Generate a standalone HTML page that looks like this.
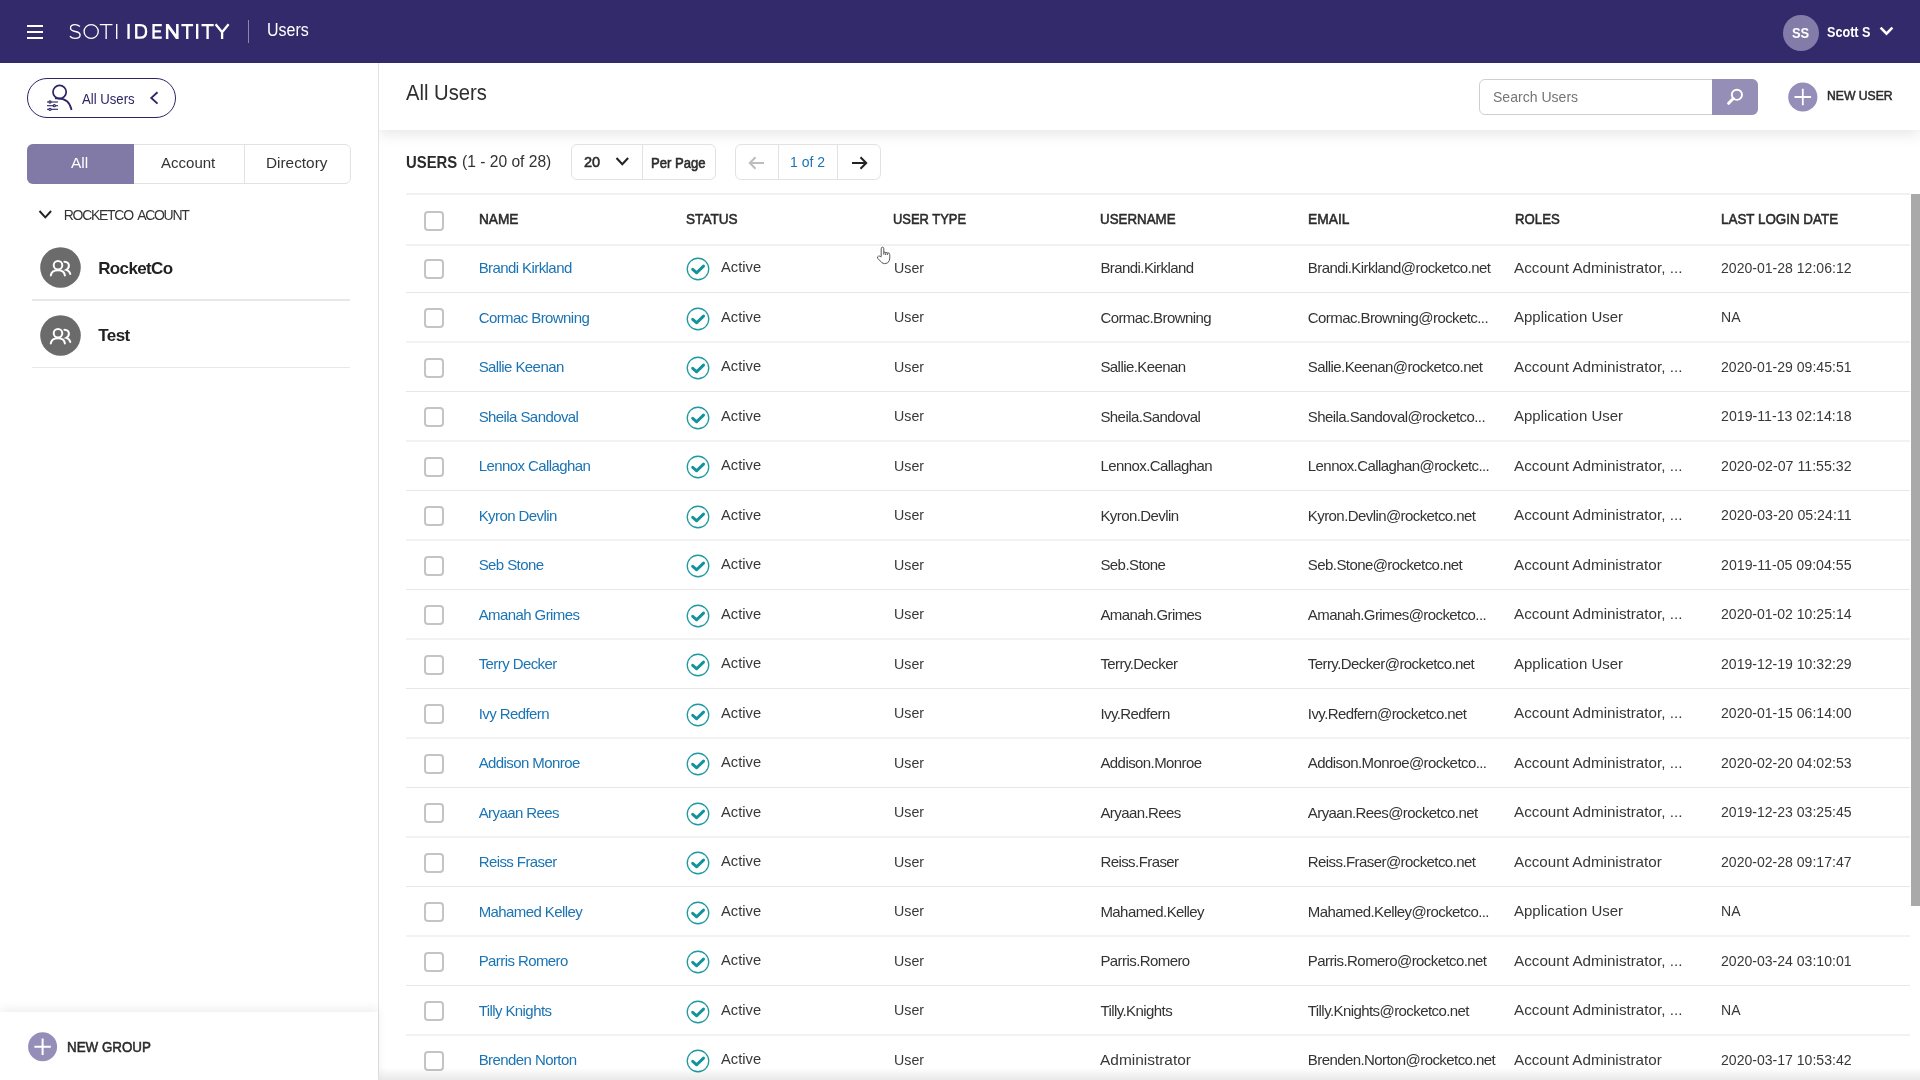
<!DOCTYPE html>
<html><head><meta charset="utf-8"><style>
*{box-sizing:border-box}
html,body{margin:0;padding:0;width:1920px;height:1080px;overflow:hidden;background:#fff;font-family:"Liberation Sans", sans-serif}
.t{position:absolute;line-height:0;white-space:nowrap;transform-origin:0 0}
.ic{position:absolute}
.hl{position:absolute;left:406px;width:1504px}
.cb{position:absolute;left:424px;width:20px;height:20px;border:2px solid #c4c4c4;border-radius:4px;background:#fff}
#hdr{position:absolute;left:0;top:0;width:1920px;height:63px;background:#322a6b}
#side{position:absolute;left:0;top:63px;width:378px;height:1017px;background:#fff}
#vdiv{position:absolute;left:378px;top:63px;width:1px;height:1017px;background:#e2e2e2}
#topbar{position:absolute;left:379px;top:63px;width:1541px;height:67px;background:#fff;box-shadow:0 4px 14px rgba(0,0,0,0.1);clip-path:inset(0 0 -30px 0)}
#foot{position:absolute;left:0;top:1012px;width:378px;height:68px;background:#fff;box-shadow:0 -3px 10px rgba(0,0,0,0.07)}
#sb{position:absolute;left:1911px;top:194px;width:9px;height:712px;background:#a9a9a9}
#botshade{position:absolute;left:379px;top:1068px;width:1541px;height:12px;background:linear-gradient(rgba(0,0,0,0),rgba(0,0,0,0.09))}
</style></head><body>
<div id="hdr">
  <svg style="position:absolute;left:27px;top:25px" width="16" height="14" viewBox="0 0 16 14"><rect x="0" y="0" width="16" height="2" fill="#fff"/><rect x="0" y="6" width="16" height="2" fill="#fff"/><rect x="0" y="12" width="16" height="2" fill="#fff"/></svg>
  <svg style="position:absolute;left:0;top:0" width="240" height="63" viewBox="0 0 240 63">
   <g fill="none" stroke="#fff" stroke-width="1.35" stroke-linecap="butt">
    <path d="M79.9 26.6 Q77.8 24.6 75.1 24.6 Q70.5 24.6 70.5 28.1 Q70.5 30.7 75.2 31.5 Q80.1 32.3 80.1 35.1 Q80.1 38.4 75.1 38.4 Q71.9 38.4 69.9 36.2"/>
    <ellipse cx="91.15" cy="31.5" rx="7.1" ry="6.9"/>
    <path d="M99.8 24.65 H112.5 M106.15 24.65 V38.9 M116.7 24 V38.9"/>
   </g>
   <g fill="none" stroke="#fff" stroke-width="2.35" stroke-linecap="butt" stroke-linejoin="miter">
    <path d="M128.55 23.9 V38.9"/>
    <path d="M136.25 25.15 V37.65 H140.2 Q146.1 37.65 146.1 31.4 Q146.1 25.15 140.2 25.15 Z"/>
    <path d="M161.8 25.15 H153.55 V37.65 H161.8 M153.55 31.3 H160.9"/>
    
    <path d="M181.4 25.15 H193.1 M187.25 25.15 V38.9"/>
    <path d="M165.9 38.9 V23.9 H168.6 L176.1 34.2 V23.9 H178.6 V38.9 H175.9 L168.4 28.6 V38.9 Z" fill="#fff" stroke="none"/>
    <path d="M197.2 23.9 V38.9"/>
    <path d="M201.5 25.15 H213.7 M207.6 25.15 V38.9"/>
    <path d="M215.6 24.2 L222.1 32.2 L228.6 24.2 M222.1 32 V38.9"/>
   </g>
  </svg>
  <div style="position:absolute;left:247.5px;top:20px;width:1.5px;height:23px;background:#8d86b4"></div>
  <div style="position:absolute;left:1782.5px;top:15px;width:36px;height:36px;border-radius:50%;background:#847ca8"></div>
  <svg style="position:absolute;left:1879px;top:26px" width="15" height="10" viewBox="0 0 15 10"><path d="M1.6 1.6 L7.5 7.7 L13.4 1.6" fill="none" stroke="#fff" stroke-width="2.6"/></svg>
</div>
<div id="side">
</div>
<div id="vdiv"></div>
<div id="topbar"></div>
<div id="foot"></div>
<!-- pill -->
<div style="position:absolute;left:27px;top:77.5px;width:148.5px;height:40.5px;border:1.5px solid #2c2566;border-radius:21px"></div>
<svg style="position:absolute;left:45px;top:83px" width="30" height="30" viewBox="0 0 30 30">
  <circle cx="14.6" cy="9" r="6.6" fill="none" stroke="#2c2566" stroke-width="1.7"/>
  <path d="M10 15.5 Q 24 14 26.6 27" fill="none" stroke="#2c2566" stroke-width="1.7"/>
  <g stroke="#2c2566" stroke-width="1.1" fill="#fff"><line x1="2" y1="19" x2="13" y2="19"/><line x1="2" y1="22.7" x2="13" y2="22.7"/><line x1="2" y1="26.3" x2="13" y2="26.3"/><circle cx="5" cy="19" r="1.1"/><circle cx="9.3" cy="22.7" r="1.1"/><circle cx="5" cy="26.3" r="1.1"/></g>
</svg>
<svg style="position:absolute;left:149px;top:91px" width="11" height="14" viewBox="0 0 11 14"><path d="M8.5 1.2 L2.3 6.9 L8.5 12.6" fill="none" stroke="#2c2566" stroke-width="1.9"/></svg>
<!-- tabs -->
<div style="position:absolute;left:27px;top:144px;width:324px;height:40px;border:1px solid #e2e2e2;border-radius:6px"></div>
<div style="position:absolute;left:27px;top:144px;width:106.7px;height:40px;background:#8179a6;border-radius:6px 0 0 6px"></div>
<div style="position:absolute;left:243.5px;top:145px;width:1px;height:38px;background:#e2e2e2"></div>
<svg style="position:absolute;left:38px;top:209px" width="15" height="11" viewBox="0 0 15 11"><path d="M1.5 2 L7.3 8.3 L13.1 2" fill="none" stroke="#222" stroke-width="1.9"/></svg>
<!-- groups -->
<svg style="position:absolute;left:40px;top:247px" width="41" height="41" viewBox="0 0 41 41"><circle cx="20.5" cy="20.5" r="20.3" fill="#6b6b6b"/>
 <g fill="none" stroke="#fff" stroke-width="2" stroke-linecap="round"><circle cx="18" cy="18.3" r="4.3"/><path d="M10.8 28.4 C11.3 24.6 14 23.2 18 23.2 C22 23.2 24.5 24.6 24.9 28.4"/><path d="M24.4 14.7 Q28.9 15.1 28.9 18.5 Q28.9 21.4 26.2 22.9 Q29.6 24 30.3 27"/></g></svg>
<div style="position:absolute;left:32px;top:299px;width:318px;height:1.5px;background:#e8e8e8"></div>
<svg style="position:absolute;left:40px;top:315px" width="41" height="41" viewBox="0 0 41 41"><circle cx="20.5" cy="20.5" r="20.3" fill="#6b6b6b"/>
 <g fill="none" stroke="#fff" stroke-width="2" stroke-linecap="round"><circle cx="18" cy="18.3" r="4.3"/><path d="M10.8 28.4 C11.3 24.6 14 23.2 18 23.2 C22 23.2 24.5 24.6 24.9 28.4"/><path d="M24.4 14.7 Q28.9 15.1 28.9 18.5 Q28.9 21.4 26.2 22.9 Q29.6 24 30.3 27"/></g></svg>
<div style="position:absolute;left:32px;top:366.5px;width:318px;height:1.5px;background:#e8e8e8"></div>
<!-- new group -->
<svg style="position:absolute;left:28px;top:1031.5px" width="30" height="30" viewBox="0 0 30 30"><circle cx="14.6" cy="14.7" r="14.5" fill="#958eb8"/><path d="M6.4 14.7 H22.8 M14.6 6.5 V22.9" stroke="#fff" stroke-width="2"/></svg>
<!-- search -->
<div style="position:absolute;left:1478.5px;top:79px;width:279px;height:36px;border:1px solid #cfcfcf;border-radius:6px;background:#fff"></div>
<div style="position:absolute;left:1712px;top:79px;width:45.5px;height:36px;border-radius:0 6px 6px 0;background:#958fb7"></div>
<svg style="position:absolute;left:1724px;top:86px" width="22" height="22" viewBox="0 0 22 22"><circle cx="12.9" cy="8.8" r="5.1" fill="none" stroke="#fff" stroke-width="1.9"/><path d="M9.3 12.5 L4.6 17.3" stroke="#fff" stroke-width="3" stroke-linecap="round"/></svg>
<!-- new user -->
<svg style="position:absolute;left:1787.5px;top:81.5px" width="30" height="30" viewBox="0 0 30 30"><circle cx="14.8" cy="15" r="14.6" fill="#958eb8"/><path d="M6.5 15 H23.1 M14.8 6.8 V23.3" stroke="#fff" stroke-width="1.8"/></svg>
<!-- per page -->
<div style="position:absolute;left:571px;top:144px;width:145px;height:36px;border:1px solid #e2e2e2;border-radius:6px"></div>
<div style="position:absolute;left:641.5px;top:145px;width:1px;height:34px;background:#e2e2e2"></div>
<svg style="position:absolute;left:615px;top:156px" width="15" height="11" viewBox="0 0 15 11"><path d="M1.5 2 L7.3 8.3 L13.1 2" fill="none" stroke="#222" stroke-width="2"/></svg>
<div style="position:absolute;left:734.5px;top:144px;width:146.5px;height:36px;border:1px solid #e2e2e2;border-radius:6px"></div>
<div style="position:absolute;left:778px;top:145px;width:1px;height:34px;background:#e2e2e2"></div>
<div style="position:absolute;left:836.5px;top:145px;width:1px;height:34px;background:#e2e2e2"></div>
<svg style="position:absolute;left:747px;top:155px" width="20" height="16" viewBox="0 0 20 16"><path d="M17 8 H3 M8.5 2.3 L2.8 8 L8.5 13.7" fill="none" stroke="#bdbdbd" stroke-width="2"/></svg>
<svg style="position:absolute;left:849px;top:155px" width="20" height="16" viewBox="0 0 20 16"><path d="M3 8 H17 M11.5 2.3 L17.2 8 L11.5 13.7" fill="none" stroke="#222" stroke-width="2"/></svg>
<div class='hl' style='top:193px;height:2px;background:#f1f1f1'></div><div class='hl' style='top:244px;height:2px;background:#f1f1f1'></div><div class='cb' style='top:211px'></div><div class='hl' style='top:292px;height:1px;background:#e7e7e7'></div><div class='cb' style='top:258.8px'></div><svg class='ic' style='left:685.6px;top:257.0px' width='24' height='24' viewBox='0 0 24 24'><circle cx='12' cy='12' r='10.75' fill='none' stroke='#1f9aa3' stroke-width='1.3'/><path d='M6.7 12.3 L10.7 15.8 L17.5 9.1' fill='none' stroke='#14929b' stroke-width='3' stroke-linecap='round' stroke-linejoin='round'/></svg><div class='hl' style='top:341px;height:2px;background:#f2f2f2'></div><div class='cb' style='top:308.3px'></div><svg class='ic' style='left:685.6px;top:306.5px' width='24' height='24' viewBox='0 0 24 24'><circle cx='12' cy='12' r='10.75' fill='none' stroke='#1f9aa3' stroke-width='1.3'/><path d='M6.7 12.3 L10.7 15.8 L17.5 9.1' fill='none' stroke='#14929b' stroke-width='3' stroke-linecap='round' stroke-linejoin='round'/></svg><div class='hl' style='top:391px;height:1px;background:#e7e7e7'></div><div class='cb' style='top:357.8px'></div><svg class='ic' style='left:685.6px;top:356.0px' width='24' height='24' viewBox='0 0 24 24'><circle cx='12' cy='12' r='10.75' fill='none' stroke='#1f9aa3' stroke-width='1.3'/><path d='M6.7 12.3 L10.7 15.8 L17.5 9.1' fill='none' stroke='#14929b' stroke-width='3' stroke-linecap='round' stroke-linejoin='round'/></svg><div class='hl' style='top:440px;height:2px;background:#f2f2f2'></div><div class='cb' style='top:407.3px'></div><svg class='ic' style='left:685.6px;top:405.5px' width='24' height='24' viewBox='0 0 24 24'><circle cx='12' cy='12' r='10.75' fill='none' stroke='#1f9aa3' stroke-width='1.3'/><path d='M6.7 12.3 L10.7 15.8 L17.5 9.1' fill='none' stroke='#14929b' stroke-width='3' stroke-linecap='round' stroke-linejoin='round'/></svg><div class='hl' style='top:490px;height:1px;background:#e7e7e7'></div><div class='cb' style='top:456.8px'></div><svg class='ic' style='left:685.6px;top:455.0px' width='24' height='24' viewBox='0 0 24 24'><circle cx='12' cy='12' r='10.75' fill='none' stroke='#1f9aa3' stroke-width='1.3'/><path d='M6.7 12.3 L10.7 15.8 L17.5 9.1' fill='none' stroke='#14929b' stroke-width='3' stroke-linecap='round' stroke-linejoin='round'/></svg><div class='hl' style='top:539px;height:2px;background:#f2f2f2'></div><div class='cb' style='top:506.3px'></div><svg class='ic' style='left:685.6px;top:504.5px' width='24' height='24' viewBox='0 0 24 24'><circle cx='12' cy='12' r='10.75' fill='none' stroke='#1f9aa3' stroke-width='1.3'/><path d='M6.7 12.3 L10.7 15.8 L17.5 9.1' fill='none' stroke='#14929b' stroke-width='3' stroke-linecap='round' stroke-linejoin='round'/></svg><div class='hl' style='top:589px;height:1px;background:#e7e7e7'></div><div class='cb' style='top:555.8px'></div><svg class='ic' style='left:685.6px;top:554.0px' width='24' height='24' viewBox='0 0 24 24'><circle cx='12' cy='12' r='10.75' fill='none' stroke='#1f9aa3' stroke-width='1.3'/><path d='M6.7 12.3 L10.7 15.8 L17.5 9.1' fill='none' stroke='#14929b' stroke-width='3' stroke-linecap='round' stroke-linejoin='round'/></svg><div class='hl' style='top:638px;height:2px;background:#f2f2f2'></div><div class='cb' style='top:605.3px'></div><svg class='ic' style='left:685.6px;top:603.5px' width='24' height='24' viewBox='0 0 24 24'><circle cx='12' cy='12' r='10.75' fill='none' stroke='#1f9aa3' stroke-width='1.3'/><path d='M6.7 12.3 L10.7 15.8 L17.5 9.1' fill='none' stroke='#14929b' stroke-width='3' stroke-linecap='round' stroke-linejoin='round'/></svg><div class='hl' style='top:688px;height:1px;background:#e7e7e7'></div><div class='cb' style='top:654.8px'></div><svg class='ic' style='left:685.6px;top:653.0px' width='24' height='24' viewBox='0 0 24 24'><circle cx='12' cy='12' r='10.75' fill='none' stroke='#1f9aa3' stroke-width='1.3'/><path d='M6.7 12.3 L10.7 15.8 L17.5 9.1' fill='none' stroke='#14929b' stroke-width='3' stroke-linecap='round' stroke-linejoin='round'/></svg><div class='hl' style='top:737px;height:2px;background:#f2f2f2'></div><div class='cb' style='top:704.3px'></div><svg class='ic' style='left:685.6px;top:702.5px' width='24' height='24' viewBox='0 0 24 24'><circle cx='12' cy='12' r='10.75' fill='none' stroke='#1f9aa3' stroke-width='1.3'/><path d='M6.7 12.3 L10.7 15.8 L17.5 9.1' fill='none' stroke='#14929b' stroke-width='3' stroke-linecap='round' stroke-linejoin='round'/></svg><div class='hl' style='top:787px;height:1px;background:#e7e7e7'></div><div class='cb' style='top:753.8px'></div><svg class='ic' style='left:685.6px;top:752.0px' width='24' height='24' viewBox='0 0 24 24'><circle cx='12' cy='12' r='10.75' fill='none' stroke='#1f9aa3' stroke-width='1.3'/><path d='M6.7 12.3 L10.7 15.8 L17.5 9.1' fill='none' stroke='#14929b' stroke-width='3' stroke-linecap='round' stroke-linejoin='round'/></svg><div class='hl' style='top:836px;height:2px;background:#f2f2f2'></div><div class='cb' style='top:803.3px'></div><svg class='ic' style='left:685.6px;top:801.5px' width='24' height='24' viewBox='0 0 24 24'><circle cx='12' cy='12' r='10.75' fill='none' stroke='#1f9aa3' stroke-width='1.3'/><path d='M6.7 12.3 L10.7 15.8 L17.5 9.1' fill='none' stroke='#14929b' stroke-width='3' stroke-linecap='round' stroke-linejoin='round'/></svg><div class='hl' style='top:886px;height:1px;background:#e7e7e7'></div><div class='cb' style='top:852.8px'></div><svg class='ic' style='left:685.6px;top:851.0px' width='24' height='24' viewBox='0 0 24 24'><circle cx='12' cy='12' r='10.75' fill='none' stroke='#1f9aa3' stroke-width='1.3'/><path d='M6.7 12.3 L10.7 15.8 L17.5 9.1' fill='none' stroke='#14929b' stroke-width='3' stroke-linecap='round' stroke-linejoin='round'/></svg><div class='hl' style='top:935px;height:2px;background:#f2f2f2'></div><div class='cb' style='top:902.3px'></div><svg class='ic' style='left:685.6px;top:900.5px' width='24' height='24' viewBox='0 0 24 24'><circle cx='12' cy='12' r='10.75' fill='none' stroke='#1f9aa3' stroke-width='1.3'/><path d='M6.7 12.3 L10.7 15.8 L17.5 9.1' fill='none' stroke='#14929b' stroke-width='3' stroke-linecap='round' stroke-linejoin='round'/></svg><div class='hl' style='top:985px;height:1px;background:#e7e7e7'></div><div class='cb' style='top:951.8px'></div><svg class='ic' style='left:685.6px;top:950.0px' width='24' height='24' viewBox='0 0 24 24'><circle cx='12' cy='12' r='10.75' fill='none' stroke='#1f9aa3' stroke-width='1.3'/><path d='M6.7 12.3 L10.7 15.8 L17.5 9.1' fill='none' stroke='#14929b' stroke-width='3' stroke-linecap='round' stroke-linejoin='round'/></svg><div class='hl' style='top:1034px;height:2px;background:#f2f2f2'></div><div class='cb' style='top:1001.3px'></div><svg class='ic' style='left:685.6px;top:999.5px' width='24' height='24' viewBox='0 0 24 24'><circle cx='12' cy='12' r='10.75' fill='none' stroke='#1f9aa3' stroke-width='1.3'/><path d='M6.7 12.3 L10.7 15.8 L17.5 9.1' fill='none' stroke='#14929b' stroke-width='3' stroke-linecap='round' stroke-linejoin='round'/></svg><div class='cb' style='top:1050.8px'></div><svg class='ic' style='left:685.6px;top:1049.0px' width='24' height='24' viewBox='0 0 24 24'><circle cx='12' cy='12' r='10.75' fill='none' stroke='#1f9aa3' stroke-width='1.3'/><path d='M6.7 12.3 L10.7 15.8 L17.5 9.1' fill='none' stroke='#14929b' stroke-width='3' stroke-linecap='round' stroke-linejoin='round'/></svg>
<div style='position:absolute;left:0;top:0;width:1920px;height:1080px;will-change:transform'><div class='t' style='left:266.54px;top:30.00px;font-size:18px;font-weight:400;color:#fff;letter-spacing:0.000px;word-spacing:0px;transform:scaleX(0.8886)'>Users</div><div class='t' style='left:1826.72px;top:32.00px;font-size:14px;font-weight:700;color:#fff;letter-spacing:0.000px;word-spacing:0px;transform:scaleX(0.9021)'>Scott S</div><div class='t' style='left:1791.95px;top:33.20px;font-size:15px;font-weight:700;color:#fff;letter-spacing:0.000px;word-spacing:0px;transform:scaleX(0.8610)'>SS</div><div class='t' style='left:405.66px;top:93.10px;font-size:22px;font-weight:400;color:#2e2e2e;letter-spacing:0.000px;word-spacing:0px;transform:scaleX(0.9194)'>All Users</div><div class='t' style='left:1492.70px;top:96.50px;font-size:15px;font-weight:400;color:#757575;letter-spacing:0.000px;word-spacing:0px;transform:scaleX(0.9367)'>Search Users</div><div class='t' style='left:1826.76px;top:95.70px;font-size:13.5px;font-weight:400;color:#2b2b2b;letter-spacing:0.000px;word-spacing:0px;transform:scaleX(0.9026);-webkit-text-stroke:0.55px currentColor'>NEW USER</div><div class='t' style='left:81.62px;top:98.50px;font-size:14px;font-weight:400;color:#2c2566;letter-spacing:0.000px;word-spacing:0px;transform:scaleX(0.9400)'>All Users</div><div class='t' style='left:71.15px;top:163.20px;font-size:15px;font-weight:400;color:#fff;letter-spacing:0.000px;word-spacing:0px;transform:scaleX(1.0341)'>All</div><div class='t' style='left:160.65px;top:163.20px;font-size:15px;font-weight:400;color:#333;letter-spacing:0.000px;word-spacing:0px;transform:scaleX(1.0018)'>Account</div><div class='t' style='left:265.95px;top:163.20px;font-size:15px;font-weight:400;color:#333;letter-spacing:0.000px;word-spacing:0px;transform:scaleX(1.0235)'>Directory</div><div class='t' style='left:63.72px;top:215.00px;font-size:14px;font-weight:400;color:#333;letter-spacing:-1.283px;word-spacing:2.5px;transform:scaleX(1.0000)'>ROCKETCO ACOUNT</div><div class='t' style='left:98.21px;top:269.40px;font-size:17px;font-weight:700;color:#222;letter-spacing:-0.628px;word-spacing:0px;transform:scaleX(1.0000)'>RocketCo</div><div class='t' style='left:98.31px;top:335.50px;font-size:17px;font-weight:700;color:#222;letter-spacing:-0.614px;word-spacing:0px;transform:scaleX(1.0000)'>Test</div><div class='t' style='left:67.15px;top:1046.60px;font-size:15px;font-weight:400;color:#2b2b2b;letter-spacing:0.000px;word-spacing:0px;transform:scaleX(0.8906);-webkit-text-stroke:0.55px currentColor'>NEW GROUP</div><div class='t' style='left:406.15px;top:162.10px;font-size:16.5px;font-weight:700;color:#2b2b2b;letter-spacing:0.000px;word-spacing:0px;transform:scaleX(0.9003)'>USERS</div><div class='t' style='left:462.18px;top:162.10px;font-size:16px;font-weight:400;color:#333;letter-spacing:0.000px;word-spacing:0px;transform:scaleX(0.9742)'>(1 - 20 of 28)</div><div class='t' style='left:583.75px;top:162.10px;font-size:15px;font-weight:400;color:#2b2b2b;letter-spacing:0.000px;word-spacing:0px;transform:scaleX(0.9685);-webkit-text-stroke:0.55px currentColor'>20</div><div class='t' style='left:651.02px;top:162.60px;font-size:14px;font-weight:400;color:#2b2b2b;letter-spacing:0.000px;word-spacing:0px;transform:scaleX(0.9362);-webkit-text-stroke:0.55px currentColor'>Per Page</div><div class='t' style='left:789.95px;top:162.10px;font-size:15px;font-weight:400;color:#1b74b3;letter-spacing:0.000px;word-spacing:0px;transform:scaleX(0.9358)'>1 of 2</div><div class='t' style='left:478.88px;top:219.40px;font-size:14.5px;font-weight:400;color:#2b2b2b;letter-spacing:0.000px;word-spacing:0px;transform:scaleX(0.9424);-webkit-text-stroke:0.55px currentColor'>NAME</div><div class='t' style='left:685.99px;top:219.40px;font-size:14.5px;font-weight:400;color:#2b2b2b;letter-spacing:0.000px;word-spacing:0px;transform:scaleX(0.9387);-webkit-text-stroke:0.55px currentColor'>STATUS</div><div class='t' style='left:893.38px;top:219.40px;font-size:14.5px;font-weight:400;color:#2b2b2b;letter-spacing:0.000px;word-spacing:0px;transform:scaleX(0.8913);-webkit-text-stroke:0.55px currentColor'>USER TYPE</div><div class='t' style='left:1100.38px;top:219.40px;font-size:14.5px;font-weight:400;color:#2b2b2b;letter-spacing:0.000px;word-spacing:0px;transform:scaleX(0.9194);-webkit-text-stroke:0.55px currentColor'>USERNAME</div><div class='t' style='left:1307.73px;top:219.40px;font-size:14.5px;font-weight:400;color:#2b2b2b;letter-spacing:0.000px;word-spacing:0px;transform:scaleX(0.9515);-webkit-text-stroke:0.55px currentColor'>EMAIL</div><div class='t' style='left:1514.78px;top:219.40px;font-size:14.5px;font-weight:400;color:#2b2b2b;letter-spacing:0.000px;word-spacing:0px;transform:scaleX(0.9102);-webkit-text-stroke:0.55px currentColor'>ROLES</div><div class='t' style='left:1721.18px;top:219.40px;font-size:14.5px;font-weight:400;color:#2b2b2b;letter-spacing:0.000px;word-spacing:0px;transform:scaleX(0.9234);-webkit-text-stroke:0.55px currentColor'>LAST LOGIN DATE</div><div class='t' style='left:478.65px;top:268.10px;font-size:15px;font-weight:400;color:#1b74b3;letter-spacing:-0.580px;word-spacing:0px;transform:scaleX(1.0000)'>Brandi Kirkland</div><div class='t' style='left:720.65px;top:267.00px;font-size:15px;font-weight:400;color:#383838;letter-spacing:0.000px;word-spacing:0px;transform:scaleX(0.9834)'>Active</div><div class='t' style='left:893.55px;top:267.50px;font-size:15px;font-weight:400;color:#383838;letter-spacing:0.000px;word-spacing:0px;transform:scaleX(0.9484)'>User</div><div class='t' style='left:1100.45px;top:268.10px;font-size:15px;font-weight:400;color:#333;letter-spacing:-0.580px;word-spacing:0px;transform:scaleX(1.0000)'>Brandi.Kirkland</div><div class='t' style='left:1307.85px;top:268.10px;font-size:15px;font-weight:400;color:#333;letter-spacing:-0.580px;word-spacing:0px;transform:scaleX(1.0000)'>Brandi.Kirkland@rocketco.net</div><div class='t' style='left:1514.05px;top:267.50px;font-size:15px;font-weight:400;color:#383838;letter-spacing:0.000px;word-spacing:0px;transform:scaleX(1.0150)'>Account Administrator, ...</div><div class='t' style='left:1721.15px;top:267.50px;font-size:15px;font-weight:400;color:#383838;letter-spacing:0.000px;word-spacing:0px;transform:scaleX(0.9370)'>2020-01-28 12:06:12</div><div class='t' style='left:478.65px;top:317.60px;font-size:15px;font-weight:400;color:#1b74b3;letter-spacing:-0.580px;word-spacing:0px;transform:scaleX(1.0000)'>Cormac Browning</div><div class='t' style='left:720.65px;top:316.50px;font-size:15px;font-weight:400;color:#383838;letter-spacing:0.000px;word-spacing:0px;transform:scaleX(0.9834)'>Active</div><div class='t' style='left:893.55px;top:317.00px;font-size:15px;font-weight:400;color:#383838;letter-spacing:0.000px;word-spacing:0px;transform:scaleX(0.9484)'>User</div><div class='t' style='left:1100.45px;top:317.60px;font-size:15px;font-weight:400;color:#333;letter-spacing:-0.580px;word-spacing:0px;transform:scaleX(1.0000)'>Cormac.Browning</div><div class='t' style='left:1307.85px;top:317.60px;font-size:15px;font-weight:400;color:#333;letter-spacing:-0.580px;word-spacing:0px;transform:scaleX(1.0000)'>Cormac.Browning@rocketc...</div><div class='t' style='left:1514.05px;top:317.00px;font-size:15px;font-weight:400;color:#383838;letter-spacing:0.000px;word-spacing:0px;transform:scaleX(0.9980)'>Application User</div><div class='t' style='left:1721.15px;top:317.00px;font-size:15px;font-weight:400;color:#383838;letter-spacing:0.000px;word-spacing:0px;transform:scaleX(0.9367)'>NA</div><div class='t' style='left:478.65px;top:367.10px;font-size:15px;font-weight:400;color:#1b74b3;letter-spacing:-0.580px;word-spacing:0px;transform:scaleX(1.0000)'>Sallie Keenan</div><div class='t' style='left:720.65px;top:366.00px;font-size:15px;font-weight:400;color:#383838;letter-spacing:0.000px;word-spacing:0px;transform:scaleX(0.9834)'>Active</div><div class='t' style='left:893.55px;top:366.50px;font-size:15px;font-weight:400;color:#383838;letter-spacing:0.000px;word-spacing:0px;transform:scaleX(0.9484)'>User</div><div class='t' style='left:1100.45px;top:367.10px;font-size:15px;font-weight:400;color:#333;letter-spacing:-0.580px;word-spacing:0px;transform:scaleX(1.0000)'>Sallie.Keenan</div><div class='t' style='left:1307.85px;top:367.10px;font-size:15px;font-weight:400;color:#333;letter-spacing:-0.580px;word-spacing:0px;transform:scaleX(1.0000)'>Sallie.Keenan@rocketco.net</div><div class='t' style='left:1514.05px;top:366.50px;font-size:15px;font-weight:400;color:#383838;letter-spacing:0.000px;word-spacing:0px;transform:scaleX(1.0150)'>Account Administrator, ...</div><div class='t' style='left:1721.15px;top:366.50px;font-size:15px;font-weight:400;color:#383838;letter-spacing:0.000px;word-spacing:0px;transform:scaleX(0.9370)'>2020-01-29 09:45:51</div><div class='t' style='left:478.65px;top:416.60px;font-size:15px;font-weight:400;color:#1b74b3;letter-spacing:-0.580px;word-spacing:0px;transform:scaleX(1.0000)'>Sheila Sandoval</div><div class='t' style='left:720.65px;top:415.50px;font-size:15px;font-weight:400;color:#383838;letter-spacing:0.000px;word-spacing:0px;transform:scaleX(0.9834)'>Active</div><div class='t' style='left:893.55px;top:416.00px;font-size:15px;font-weight:400;color:#383838;letter-spacing:0.000px;word-spacing:0px;transform:scaleX(0.9484)'>User</div><div class='t' style='left:1100.45px;top:416.60px;font-size:15px;font-weight:400;color:#333;letter-spacing:-0.580px;word-spacing:0px;transform:scaleX(1.0000)'>Sheila.Sandoval</div><div class='t' style='left:1307.85px;top:416.60px;font-size:15px;font-weight:400;color:#333;letter-spacing:-0.580px;word-spacing:0px;transform:scaleX(1.0000)'>Sheila.Sandoval@rocketco...</div><div class='t' style='left:1514.05px;top:416.00px;font-size:15px;font-weight:400;color:#383838;letter-spacing:0.000px;word-spacing:0px;transform:scaleX(0.9980)'>Application User</div><div class='t' style='left:1721.15px;top:416.00px;font-size:15px;font-weight:400;color:#383838;letter-spacing:0.000px;word-spacing:0px;transform:scaleX(0.9447)'>2019-11-13 02:14:18</div><div class='t' style='left:478.65px;top:466.10px;font-size:15px;font-weight:400;color:#1b74b3;letter-spacing:-0.580px;word-spacing:0px;transform:scaleX(1.0000)'>Lennox Callaghan</div><div class='t' style='left:720.65px;top:465.00px;font-size:15px;font-weight:400;color:#383838;letter-spacing:0.000px;word-spacing:0px;transform:scaleX(0.9834)'>Active</div><div class='t' style='left:893.55px;top:465.50px;font-size:15px;font-weight:400;color:#383838;letter-spacing:0.000px;word-spacing:0px;transform:scaleX(0.9484)'>User</div><div class='t' style='left:1100.45px;top:466.10px;font-size:15px;font-weight:400;color:#333;letter-spacing:-0.580px;word-spacing:0px;transform:scaleX(1.0000)'>Lennox.Callaghan</div><div class='t' style='left:1307.85px;top:466.10px;font-size:15px;font-weight:400;color:#333;letter-spacing:-0.580px;word-spacing:0px;transform:scaleX(1.0000)'>Lennox.Callaghan@rocketc...</div><div class='t' style='left:1514.05px;top:465.50px;font-size:15px;font-weight:400;color:#383838;letter-spacing:0.000px;word-spacing:0px;transform:scaleX(1.0150)'>Account Administrator, ...</div><div class='t' style='left:1721.15px;top:465.50px;font-size:15px;font-weight:400;color:#383838;letter-spacing:0.000px;word-spacing:0px;transform:scaleX(0.9447)'>2020-02-07 11:55:32</div><div class='t' style='left:478.65px;top:515.60px;font-size:15px;font-weight:400;color:#1b74b3;letter-spacing:-0.580px;word-spacing:0px;transform:scaleX(1.0000)'>Kyron Devlin</div><div class='t' style='left:720.65px;top:514.50px;font-size:15px;font-weight:400;color:#383838;letter-spacing:0.000px;word-spacing:0px;transform:scaleX(0.9834)'>Active</div><div class='t' style='left:893.55px;top:515.00px;font-size:15px;font-weight:400;color:#383838;letter-spacing:0.000px;word-spacing:0px;transform:scaleX(0.9484)'>User</div><div class='t' style='left:1100.45px;top:515.60px;font-size:15px;font-weight:400;color:#333;letter-spacing:-0.580px;word-spacing:0px;transform:scaleX(1.0000)'>Kyron.Devlin</div><div class='t' style='left:1307.85px;top:515.60px;font-size:15px;font-weight:400;color:#333;letter-spacing:-0.580px;word-spacing:0px;transform:scaleX(1.0000)'>Kyron.Devlin@rocketco.net</div><div class='t' style='left:1514.05px;top:515.00px;font-size:15px;font-weight:400;color:#383838;letter-spacing:0.000px;word-spacing:0px;transform:scaleX(1.0150)'>Account Administrator, ...</div><div class='t' style='left:1721.15px;top:515.00px;font-size:15px;font-weight:400;color:#383838;letter-spacing:0.000px;word-spacing:0px;transform:scaleX(0.9447)'>2020-03-20 05:24:11</div><div class='t' style='left:478.65px;top:565.10px;font-size:15px;font-weight:400;color:#1b74b3;letter-spacing:-0.580px;word-spacing:0px;transform:scaleX(1.0000)'>Seb Stone</div><div class='t' style='left:720.65px;top:564.00px;font-size:15px;font-weight:400;color:#383838;letter-spacing:0.000px;word-spacing:0px;transform:scaleX(0.9834)'>Active</div><div class='t' style='left:893.55px;top:564.50px;font-size:15px;font-weight:400;color:#383838;letter-spacing:0.000px;word-spacing:0px;transform:scaleX(0.9484)'>User</div><div class='t' style='left:1100.45px;top:565.10px;font-size:15px;font-weight:400;color:#333;letter-spacing:-0.580px;word-spacing:0px;transform:scaleX(1.0000)'>Seb.Stone</div><div class='t' style='left:1307.85px;top:565.10px;font-size:15px;font-weight:400;color:#333;letter-spacing:-0.580px;word-spacing:0px;transform:scaleX(1.0000)'>Seb.Stone@rocketco.net</div><div class='t' style='left:1514.05px;top:564.50px;font-size:15px;font-weight:400;color:#383838;letter-spacing:0.000px;word-spacing:0px;transform:scaleX(1.0131)'>Account Administrator</div><div class='t' style='left:1721.15px;top:564.50px;font-size:15px;font-weight:400;color:#383838;letter-spacing:0.000px;word-spacing:0px;transform:scaleX(0.9447)'>2019-11-05 09:04:55</div><div class='t' style='left:478.65px;top:614.60px;font-size:15px;font-weight:400;color:#1b74b3;letter-spacing:-0.580px;word-spacing:0px;transform:scaleX(1.0000)'>Amanah Grimes</div><div class='t' style='left:720.65px;top:613.50px;font-size:15px;font-weight:400;color:#383838;letter-spacing:0.000px;word-spacing:0px;transform:scaleX(0.9834)'>Active</div><div class='t' style='left:893.55px;top:614.00px;font-size:15px;font-weight:400;color:#383838;letter-spacing:0.000px;word-spacing:0px;transform:scaleX(0.9484)'>User</div><div class='t' style='left:1100.45px;top:614.60px;font-size:15px;font-weight:400;color:#333;letter-spacing:-0.580px;word-spacing:0px;transform:scaleX(1.0000)'>Amanah.Grimes</div><div class='t' style='left:1307.85px;top:614.60px;font-size:15px;font-weight:400;color:#333;letter-spacing:-0.580px;word-spacing:0px;transform:scaleX(1.0000)'>Amanah.Grimes@rocketco...</div><div class='t' style='left:1514.05px;top:614.00px;font-size:15px;font-weight:400;color:#383838;letter-spacing:0.000px;word-spacing:0px;transform:scaleX(1.0150)'>Account Administrator, ...</div><div class='t' style='left:1721.15px;top:614.00px;font-size:15px;font-weight:400;color:#383838;letter-spacing:0.000px;word-spacing:0px;transform:scaleX(0.9370)'>2020-01-02 10:25:14</div><div class='t' style='left:478.65px;top:664.10px;font-size:15px;font-weight:400;color:#1b74b3;letter-spacing:-0.580px;word-spacing:0px;transform:scaleX(1.0000)'>Terry Decker</div><div class='t' style='left:720.65px;top:663.00px;font-size:15px;font-weight:400;color:#383838;letter-spacing:0.000px;word-spacing:0px;transform:scaleX(0.9834)'>Active</div><div class='t' style='left:893.55px;top:663.50px;font-size:15px;font-weight:400;color:#383838;letter-spacing:0.000px;word-spacing:0px;transform:scaleX(0.9484)'>User</div><div class='t' style='left:1100.45px;top:664.10px;font-size:15px;font-weight:400;color:#333;letter-spacing:-0.580px;word-spacing:0px;transform:scaleX(1.0000)'>Terry.Decker</div><div class='t' style='left:1307.85px;top:664.10px;font-size:15px;font-weight:400;color:#333;letter-spacing:-0.580px;word-spacing:0px;transform:scaleX(1.0000)'>Terry.Decker@rocketco.net</div><div class='t' style='left:1514.05px;top:663.50px;font-size:15px;font-weight:400;color:#383838;letter-spacing:0.000px;word-spacing:0px;transform:scaleX(0.9980)'>Application User</div><div class='t' style='left:1721.15px;top:663.50px;font-size:15px;font-weight:400;color:#383838;letter-spacing:0.000px;word-spacing:0px;transform:scaleX(0.9370)'>2019-12-19 10:32:29</div><div class='t' style='left:478.65px;top:713.60px;font-size:15px;font-weight:400;color:#1b74b3;letter-spacing:-0.580px;word-spacing:0px;transform:scaleX(1.0000)'>Ivy Redfern</div><div class='t' style='left:720.65px;top:712.50px;font-size:15px;font-weight:400;color:#383838;letter-spacing:0.000px;word-spacing:0px;transform:scaleX(0.9834)'>Active</div><div class='t' style='left:893.55px;top:713.00px;font-size:15px;font-weight:400;color:#383838;letter-spacing:0.000px;word-spacing:0px;transform:scaleX(0.9484)'>User</div><div class='t' style='left:1100.45px;top:713.60px;font-size:15px;font-weight:400;color:#333;letter-spacing:-0.580px;word-spacing:0px;transform:scaleX(1.0000)'>Ivy.Redfern</div><div class='t' style='left:1307.85px;top:713.60px;font-size:15px;font-weight:400;color:#333;letter-spacing:-0.580px;word-spacing:0px;transform:scaleX(1.0000)'>Ivy.Redfern@rocketco.net</div><div class='t' style='left:1514.05px;top:713.00px;font-size:15px;font-weight:400;color:#383838;letter-spacing:0.000px;word-spacing:0px;transform:scaleX(1.0150)'>Account Administrator, ...</div><div class='t' style='left:1721.15px;top:713.00px;font-size:15px;font-weight:400;color:#383838;letter-spacing:0.000px;word-spacing:0px;transform:scaleX(0.9370)'>2020-01-15 06:14:00</div><div class='t' style='left:478.65px;top:763.10px;font-size:15px;font-weight:400;color:#1b74b3;letter-spacing:-0.580px;word-spacing:0px;transform:scaleX(1.0000)'>Addison Monroe</div><div class='t' style='left:720.65px;top:762.00px;font-size:15px;font-weight:400;color:#383838;letter-spacing:0.000px;word-spacing:0px;transform:scaleX(0.9834)'>Active</div><div class='t' style='left:893.55px;top:762.50px;font-size:15px;font-weight:400;color:#383838;letter-spacing:0.000px;word-spacing:0px;transform:scaleX(0.9484)'>User</div><div class='t' style='left:1100.45px;top:763.10px;font-size:15px;font-weight:400;color:#333;letter-spacing:-0.580px;word-spacing:0px;transform:scaleX(1.0000)'>Addison.Monroe</div><div class='t' style='left:1307.85px;top:763.10px;font-size:15px;font-weight:400;color:#333;letter-spacing:-0.580px;word-spacing:0px;transform:scaleX(1.0000)'>Addison.Monroe@rocketco...</div><div class='t' style='left:1514.05px;top:762.50px;font-size:15px;font-weight:400;color:#383838;letter-spacing:0.000px;word-spacing:0px;transform:scaleX(1.0150)'>Account Administrator, ...</div><div class='t' style='left:1721.15px;top:762.50px;font-size:15px;font-weight:400;color:#383838;letter-spacing:0.000px;word-spacing:0px;transform:scaleX(0.9370)'>2020-02-20 04:02:53</div><div class='t' style='left:478.65px;top:812.60px;font-size:15px;font-weight:400;color:#1b74b3;letter-spacing:-0.580px;word-spacing:0px;transform:scaleX(1.0000)'>Aryaan Rees</div><div class='t' style='left:720.65px;top:811.50px;font-size:15px;font-weight:400;color:#383838;letter-spacing:0.000px;word-spacing:0px;transform:scaleX(0.9834)'>Active</div><div class='t' style='left:893.55px;top:812.00px;font-size:15px;font-weight:400;color:#383838;letter-spacing:0.000px;word-spacing:0px;transform:scaleX(0.9484)'>User</div><div class='t' style='left:1100.45px;top:812.60px;font-size:15px;font-weight:400;color:#333;letter-spacing:-0.580px;word-spacing:0px;transform:scaleX(1.0000)'>Aryaan.Rees</div><div class='t' style='left:1307.85px;top:812.60px;font-size:15px;font-weight:400;color:#333;letter-spacing:-0.580px;word-spacing:0px;transform:scaleX(1.0000)'>Aryaan.Rees@rocketco.net</div><div class='t' style='left:1514.05px;top:812.00px;font-size:15px;font-weight:400;color:#383838;letter-spacing:0.000px;word-spacing:0px;transform:scaleX(1.0150)'>Account Administrator, ...</div><div class='t' style='left:1721.15px;top:812.00px;font-size:15px;font-weight:400;color:#383838;letter-spacing:0.000px;word-spacing:0px;transform:scaleX(0.9370)'>2019-12-23 03:25:45</div><div class='t' style='left:478.65px;top:862.10px;font-size:15px;font-weight:400;color:#1b74b3;letter-spacing:-0.580px;word-spacing:0px;transform:scaleX(1.0000)'>Reiss Fraser</div><div class='t' style='left:720.65px;top:861.00px;font-size:15px;font-weight:400;color:#383838;letter-spacing:0.000px;word-spacing:0px;transform:scaleX(0.9834)'>Active</div><div class='t' style='left:893.55px;top:861.50px;font-size:15px;font-weight:400;color:#383838;letter-spacing:0.000px;word-spacing:0px;transform:scaleX(0.9484)'>User</div><div class='t' style='left:1100.45px;top:862.10px;font-size:15px;font-weight:400;color:#333;letter-spacing:-0.580px;word-spacing:0px;transform:scaleX(1.0000)'>Reiss.Fraser</div><div class='t' style='left:1307.85px;top:862.10px;font-size:15px;font-weight:400;color:#333;letter-spacing:-0.580px;word-spacing:0px;transform:scaleX(1.0000)'>Reiss.Fraser@rocketco.net</div><div class='t' style='left:1514.05px;top:861.50px;font-size:15px;font-weight:400;color:#383838;letter-spacing:0.000px;word-spacing:0px;transform:scaleX(1.0131)'>Account Administrator</div><div class='t' style='left:1721.15px;top:861.50px;font-size:15px;font-weight:400;color:#383838;letter-spacing:0.000px;word-spacing:0px;transform:scaleX(0.9370)'>2020-02-28 09:17:47</div><div class='t' style='left:478.65px;top:911.60px;font-size:15px;font-weight:400;color:#1b74b3;letter-spacing:-0.580px;word-spacing:0px;transform:scaleX(1.0000)'>Mahamed Kelley</div><div class='t' style='left:720.65px;top:910.50px;font-size:15px;font-weight:400;color:#383838;letter-spacing:0.000px;word-spacing:0px;transform:scaleX(0.9834)'>Active</div><div class='t' style='left:893.55px;top:911.00px;font-size:15px;font-weight:400;color:#383838;letter-spacing:0.000px;word-spacing:0px;transform:scaleX(0.9484)'>User</div><div class='t' style='left:1100.45px;top:911.60px;font-size:15px;font-weight:400;color:#333;letter-spacing:-0.580px;word-spacing:0px;transform:scaleX(1.0000)'>Mahamed.Kelley</div><div class='t' style='left:1307.85px;top:911.60px;font-size:15px;font-weight:400;color:#333;letter-spacing:-0.580px;word-spacing:0px;transform:scaleX(1.0000)'>Mahamed.Kelley@rocketco...</div><div class='t' style='left:1514.05px;top:911.00px;font-size:15px;font-weight:400;color:#383838;letter-spacing:0.000px;word-spacing:0px;transform:scaleX(0.9980)'>Application User</div><div class='t' style='left:1721.15px;top:911.00px;font-size:15px;font-weight:400;color:#383838;letter-spacing:0.000px;word-spacing:0px;transform:scaleX(0.9367)'>NA</div><div class='t' style='left:478.65px;top:961.10px;font-size:15px;font-weight:400;color:#1b74b3;letter-spacing:-0.580px;word-spacing:0px;transform:scaleX(1.0000)'>Parris Romero</div><div class='t' style='left:720.65px;top:960.00px;font-size:15px;font-weight:400;color:#383838;letter-spacing:0.000px;word-spacing:0px;transform:scaleX(0.9834)'>Active</div><div class='t' style='left:893.55px;top:960.50px;font-size:15px;font-weight:400;color:#383838;letter-spacing:0.000px;word-spacing:0px;transform:scaleX(0.9484)'>User</div><div class='t' style='left:1100.45px;top:961.10px;font-size:15px;font-weight:400;color:#333;letter-spacing:-0.580px;word-spacing:0px;transform:scaleX(1.0000)'>Parris.Romero</div><div class='t' style='left:1307.85px;top:961.10px;font-size:15px;font-weight:400;color:#333;letter-spacing:-0.580px;word-spacing:0px;transform:scaleX(1.0000)'>Parris.Romero@rocketco.net</div><div class='t' style='left:1514.05px;top:960.50px;font-size:15px;font-weight:400;color:#383838;letter-spacing:0.000px;word-spacing:0px;transform:scaleX(1.0150)'>Account Administrator, ...</div><div class='t' style='left:1721.15px;top:960.50px;font-size:15px;font-weight:400;color:#383838;letter-spacing:0.000px;word-spacing:0px;transform:scaleX(0.9370)'>2020-03-24 03:10:01</div><div class='t' style='left:478.65px;top:1010.60px;font-size:15px;font-weight:400;color:#1b74b3;letter-spacing:-0.580px;word-spacing:0px;transform:scaleX(1.0000)'>Tilly Knights</div><div class='t' style='left:720.65px;top:1009.50px;font-size:15px;font-weight:400;color:#383838;letter-spacing:0.000px;word-spacing:0px;transform:scaleX(0.9834)'>Active</div><div class='t' style='left:893.55px;top:1010.00px;font-size:15px;font-weight:400;color:#383838;letter-spacing:0.000px;word-spacing:0px;transform:scaleX(0.9484)'>User</div><div class='t' style='left:1100.45px;top:1010.60px;font-size:15px;font-weight:400;color:#333;letter-spacing:-0.580px;word-spacing:0px;transform:scaleX(1.0000)'>Tilly.Knights</div><div class='t' style='left:1307.85px;top:1010.60px;font-size:15px;font-weight:400;color:#333;letter-spacing:-0.580px;word-spacing:0px;transform:scaleX(1.0000)'>Tilly.Knights@rocketco.net</div><div class='t' style='left:1514.05px;top:1010.00px;font-size:15px;font-weight:400;color:#383838;letter-spacing:0.000px;word-spacing:0px;transform:scaleX(1.0150)'>Account Administrator, ...</div><div class='t' style='left:1721.15px;top:1010.00px;font-size:15px;font-weight:400;color:#383838;letter-spacing:0.000px;word-spacing:0px;transform:scaleX(0.9367)'>NA</div><div class='t' style='left:478.65px;top:1060.10px;font-size:15px;font-weight:400;color:#1b74b3;letter-spacing:-0.580px;word-spacing:0px;transform:scaleX(1.0000)'>Brenden Norton</div><div class='t' style='left:720.65px;top:1059.00px;font-size:15px;font-weight:400;color:#383838;letter-spacing:0.000px;word-spacing:0px;transform:scaleX(0.9834)'>Active</div><div class='t' style='left:893.55px;top:1059.50px;font-size:15px;font-weight:400;color:#383838;letter-spacing:0.000px;word-spacing:0px;transform:scaleX(0.9484)'>User</div><div class='t' style='left:1099.65px;top:1059.50px;font-size:15px;font-weight:400;color:#383838;letter-spacing:0.000px;word-spacing:0px;transform:scaleX(1.0291)'>Administrator</div><div class='t' style='left:1307.85px;top:1060.10px;font-size:15px;font-weight:400;color:#333;letter-spacing:-0.580px;word-spacing:0px;transform:scaleX(1.0000)'>Brenden.Norton@rocketco.net</div><div class='t' style='left:1514.05px;top:1059.50px;font-size:15px;font-weight:400;color:#383838;letter-spacing:0.000px;word-spacing:0px;transform:scaleX(1.0131)'>Account Administrator</div><div class='t' style='left:1721.15px;top:1059.50px;font-size:15px;font-weight:400;color:#383838;letter-spacing:0.000px;word-spacing:0px;transform:scaleX(0.9370)'>2020-03-17 10:53:42</div></div>
<svg style="position:absolute;left:876px;top:246px" width="16" height="20" viewBox="0 0 16 20"><path d="M5.2 10.6 V2.8 Q5.2 1.2 6.5 1.2 Q7.8 1.2 7.8 2.8 V8.8 M7.8 6 Q9.6 5.8 9.6 7.2 V9 M9.6 6.5 Q11.4 6.3 11.4 7.6 V9 M11.4 6.8 Q13.8 6.6 13.8 8.6 V12 Q13.8 15 11.6 16.9 Q8.6 18.6 6 16.8 L1.6 12.2 Q0.9 10.6 2.5 10.1 Q3.8 9.8 5.2 11" fill="#fff" stroke="#505050" stroke-width="0.95" stroke-linejoin="round"/></svg>
<div id="sb"></div>
<div id="botshade"></div>
</body></html>
